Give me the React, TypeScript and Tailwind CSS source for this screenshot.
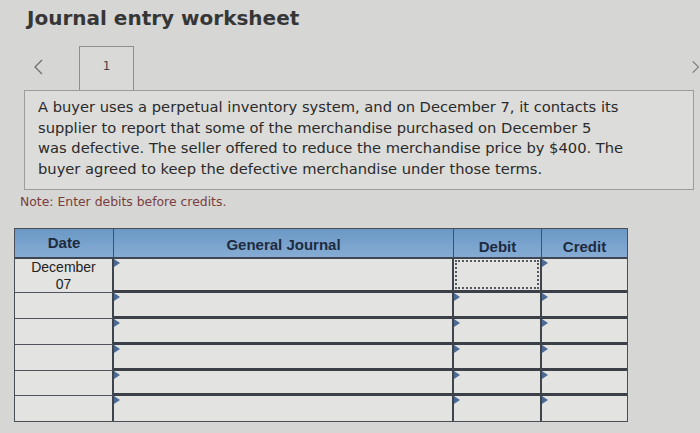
import React from 'react';

const rows = [
  { date: ['December', '07'], h: 'h-[34px]', focus: true },
  { date: [], h: 'h-[26px]' },
  { date: [], h: 'h-[26px]' },
  { date: [], h: 'h-[26px]' },
  { date: [], h: 'h-[25px]' },
  { date: [], h: 'h-[25px]' },
];

const Marker = () => (
  <span className="absolute left-0 top-0 w-0 h-0 border-y-[4px] border-y-transparent border-l-[6px] border-l-[#4b6b94]" />
);

const Chevron = ({ dir }: { dir: 'left' | 'right' }) => (
  <svg width="10" height="16" viewBox="0 0 10 16" fill="none" stroke="#6f6f6f" strokeWidth="1.3">
    {dir === 'left' ? <polyline points="9,1 2,8 9,15" /> : <polyline points="1,1 8,8 1,15" />}
  </svg>
);

const App: React.FC = () => {
  return (
    <div className="w-[700px] h-[433px] overflow-hidden bg-[#d6d6d4] font-['DejaVu_Sans',sans-serif] text-[#2e2e2e]">
      {/* Title */}
      <h1 className="pl-[27px] pt-[5px] text-[20px] font-bold text-[#363636] leading-[27px]">
        Journal entry worksheet
      </h1>

      {/* Tabs */}
      <div className="flex items-end h-[58px]">
        <div className="w-[79px] h-[44px] flex items-center pl-[33px] pb-[2px]">
          <Chevron dir="left" />
        </div>
        <div className="w-[55px] h-[44px] border border-b-0 border-[#8f8f8d] bg-[#d9d9d7] flex justify-center pt-[10px] text-[12px] text-[#444]">
          1
        </div>
        <div className="flex-1" />
        <div className="w-[8px] h-[44px] flex items-center pb-[2px]">
          <Chevron dir="right" />
        </div>
      </div>

      {/* Question box */}
      <div className="ml-[24px] w-[670px] h-[100px] border border-[#9c9c9a] bg-[#dcdcda] pl-[13px] pt-[6px] text-[14.7px] leading-[20.5px] text-[#2a2a2a]">
        A buyer uses a perpetual inventory system, and on December 7, it contacts its
        <br />
        supplier to report that some of the merchandise purchased on December 5
        <br />
        was defective. The seller offered to reduce the merchandise price by $400. The
        <br />
        buyer agreed to keep the defective merchandise under those terms.
      </div>

      {/* Note */}
      <p className="pl-[20px] pt-[4px] text-[12.4px] text-[#7a3d3d] leading-[16px]">
        Note: Enter debits before credits.
      </p>

      {/* Table */}
      <div className="ml-[14px] mt-[18px] w-[614px] border border-[#4a4e56] font-['Liberation_Sans',sans-serif]">
        <div className="flex h-[30px] bg-gradient-to-b from-[#6b98c6] to-[#86acd3] text-[15px] font-bold text-[#1e2b3e] border-b-2 border-[#3e4652]">
          <div className="w-[99px] flex justify-center pt-[3px] border-r border-[#45505e]">Date</div>
          <div className="w-[340px] flex justify-center pt-[5px] border-r border-[#45505e]">General Journal</div>
          <div className="w-[88px] flex justify-center pt-[7px] border-r border-[#45505e]">Debit</div>
          <div className="flex-1 flex justify-center pt-[7px]">Credit</div>
        </div>
        {rows.map((r, i) => (
          <div key={i} className={`flex ${r.h} bg-[#e3e3e1]`}>
            <div
              className={`w-[99px] border-r-2 border-[#3f434b] flex flex-col items-center justify-center text-[14px] leading-[17px] text-[#222] ${
                i < rows.length - 1 ? 'border-b border-b-[#4f535b]' : ''
              }`}
            >
              {r.date.map((d) => (
                <span key={d}>{d}</span>
              ))}
            </div>
            <div
              className={`relative w-[340px] border-r-2 border-[#3f434b] ${
                i < rows.length - 1 ? 'border-b-[3px] border-b-[#3b3f47]' : ''
              }`}
            >
              <Marker />
            </div>
            <div
              className={`relative w-[88px] border-r-2 border-[#3f434b] ${
                i < rows.length - 1 ? 'border-b-[3px] border-b-[#3b3f47]' : ''
              }`}
            >
              {r.focus ? (
                <div className="absolute inset-[1px] border-2 border-dotted border-[#55595f]" />
              ) : (
                <Marker />
              )}
            </div>
            <div
              className={`relative flex-1 ${i < rows.length - 1 ? 'border-b-[3px] border-b-[#3b3f47]' : ''}`}
            >
              <Marker />
            </div>
          </div>
        ))}
      </div>
    </div>
  );
};

export default App;
